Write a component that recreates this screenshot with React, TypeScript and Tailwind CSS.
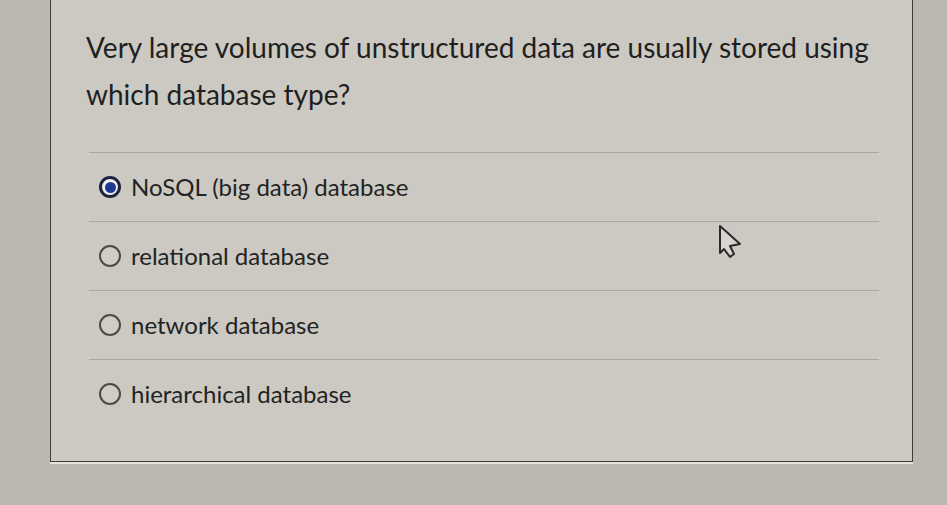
import React from 'react';

const options = [
  { label: 'NoSQL (big data) database', selected: true },
  { label: 'relational database', selected: false },
  { label: 'network database', selected: false },
  { label: 'hierarchical database', selected: false },
];

const Radio: React.FC<{ selected: boolean }> = ({ selected }) =>
  selected ? (
    <span className="flex h-[22px] w-[22px] shrink-0 items-center justify-center rounded-full border-[3px] border-[#1c2240] bg-[#f1f0ec]">
      <span className="h-[11px] w-[11px] rounded-full bg-[#1f3a93]" />
    </span>
  ) : (
    <span className="h-[22px] w-[22px] shrink-0 rounded-full border-2 border-[#4a4a48] bg-[#cfcdc6]" />
  );

export default function App() {
  return (
    <div
      className="relative h-[505px] w-[947px] overflow-hidden bg-[#bab8b1]"
      style={{ fontFamily: 'Lato, "Noto Sans", sans-serif' }}
    >
      <div className="ml-[50px] flex h-[462px] w-[863px] flex-col border-x border-b border-[#3d3c38] bg-[#cbc9c2] shadow-[0_2px_0_#e3e1da]">
        <div className="pl-[35px] pr-[20px] pt-[24px] text-[28px] leading-[47px] text-[#1f1f1f]">
          Very large volumes of unstructured data are usually stored using
          <br />
          which database type?
        </div>
        <div className="mt-[34px] ml-[38px] mr-[33px] border-t border-[#a9a7a0]" />
        {options.map((o, i) => (
          <div key={i} className="ml-[38px] mr-[33px] flex flex-col">
            <div className="flex h-[68px] items-center gap-[10px] pl-[10px] text-[24px] text-[#232323]">
              <Radio selected={o.selected} />
              <span>{o.label}</span>
            </div>
            {i < 3 && <div className="border-t border-[#a9a7a0]" />}
          </div>
        ))}
      </div>
      <svg
        className="absolute left-[718px] top-[224px]"
        width="26"
        height="36"
        viewBox="0 0 26 36"
      >
        <path
          d="M2 2 L2 29 L6 25 L12 33 L16 30 L12 22 L22 20 Z"
          fill="#d8d6cf"
          stroke="#2a2a2a"
          strokeWidth="2"
          strokeLinejoin="round"
        />
      </svg>
    </div>
  );
}
